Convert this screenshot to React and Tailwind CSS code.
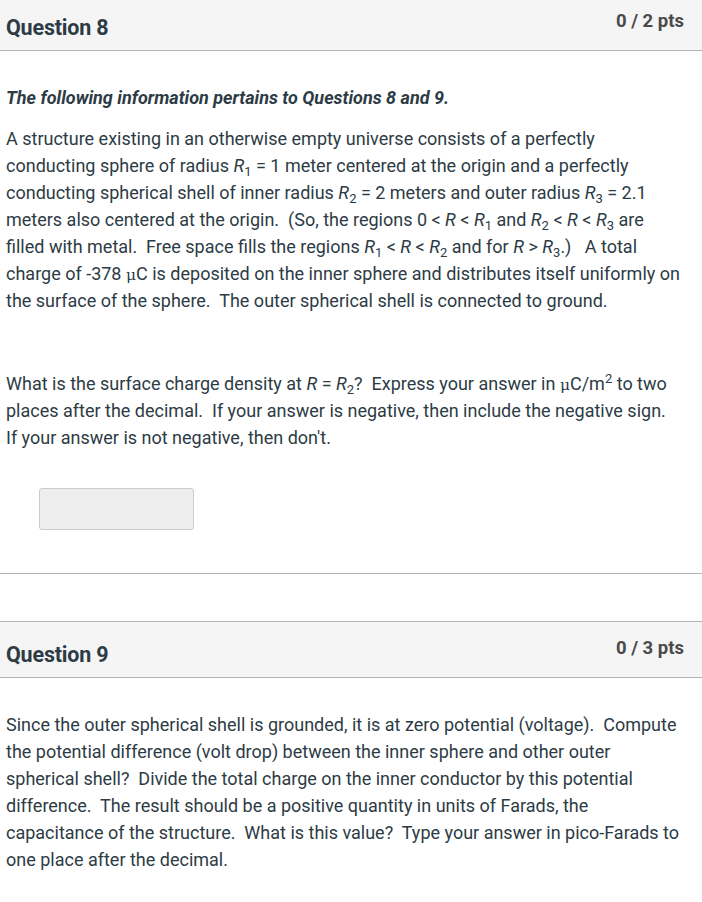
const font = { fontFamily: 'Roboto, "Liberation Sans", sans-serif' }

function R({ n }) {
  return (
    <span className="whitespace-nowrap">
      <i>R</i>
      {n && <span className="text-[13px] relative top-[4px] leading-none">{n}</span>}
    </span>
  )
}

function Mu() {
  return <span className="font-['DejaVu_Serif',serif] text-[15.5px] leading-none">μ</span>
}

function Header({ title, pts, className = '' }) {
  return (
    <div className={`h-[57px] bg-[#f5f5f5] border-y border-[#b3b3b3] flex justify-between pl-[6px] pr-[18px] ${className}`}>
      <h3 className="text-[21.5px] font-bold text-[#2d3b45] pt-[19px] leading-[28px] tracking-[-0.2px]">{title}</h3>
      <span className="text-[18.5px] font-bold text-[#4a4a4a] pt-[13px] leading-[26px]">{pts}</span>
    </div>
  )
}

export default function App() {
  return (
    <div style={font} className="w-[702px] h-[902px] overflow-hidden bg-white text-[#2d3b45] text-[18px] leading-[27px]">
      <Header title="Question 8" pts="0 / 2 pts" className="-mt-[6px]" />
      <div className="border-b border-[#b3b3b3] pl-[6px] pr-[18px] pt-[33px] pb-[43px]">
        <p className="font-bold italic">The following information pertains to Questions 8 and 9.</p>
        <p className="mt-[14px]">
          A structure existing in an otherwise empty universe consists of a perfectly conducting sphere of radius <R n="1" /> = 1 meter centered at the origin and a perfectly conducting spherical shell of inner radius <R n="2" /> = 2 meters and outer radius <R n="3" /> = 2.1 meters also centered at the origin.&nbsp; (So, the regions 0 &lt; <R /> &lt; <R n="1" /> and <R n="2" /> &lt; <R /> &lt; <R n="3" /> are filled with metal.&nbsp; Free space fills the regions <R n="1" /> &lt; <R /> &lt; <R n="2" /> and for <R /> &gt; <R n="3" />.)&nbsp;&nbsp; A total charge of -378 <Mu />C is deposited on the inner sphere and distributes itself uniformly on the surface of the sphere.&nbsp; The outer spherical shell is connected to ground.
        </p>
        <p className="mt-[56px]">
          What is the surface charge density at <R /> = <R n="2" />?&nbsp; Express your answer in <Mu />C/m<span className="text-[13px] relative -top-[7px] leading-none">2</span> to two places after the decimal.&nbsp; If your answer is negative, then include the negative sign.&nbsp; If your answer is not negative, then don't.
        </p>
        <div className="mt-[37px] ml-[33px] w-[155px] h-[42px] bg-[#eeeeee] border border-[#cccccc] rounded-[3px]" />
      </div>
      <Header title="Question 9" pts="0 / 3 pts" className="mt-[47px]" />
      <div className="pl-[6px] pr-[18px] pt-[33px]">
        <p>
          Since the outer spherical shell is grounded, it is at zero potential (voltage).&nbsp; Compute the potential difference (volt drop) between the inner sphere and other outer spherical shell?&nbsp; Divide the total charge on the inner conductor by this potential difference.&nbsp; The result should be a positive quantity in units of Farads, the capacitance of the structure.&nbsp; What is this value?&nbsp; Type your answer in pico-Farads to one place after the decimal.
        </p>
      </div>
    </div>
  )
}
